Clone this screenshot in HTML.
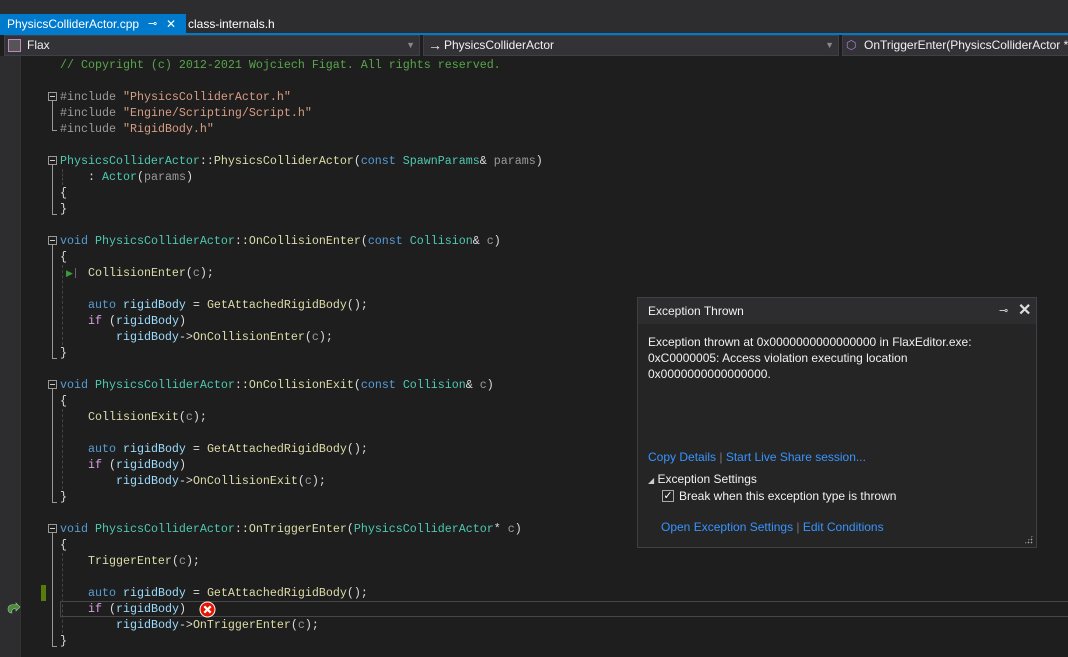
<!DOCTYPE html>
<html><head><meta charset="utf-8"><style>
*{margin:0;padding:0;box-sizing:border-box}
body{width:1068px;height:657px;background:#1e1e1e;overflow:hidden;position:relative;font-family:"Liberation Sans",sans-serif}
.top{position:absolute;left:0;top:0;width:1068px;height:35px;background:#2d2d30}
.tab{position:absolute;top:14px;height:20px;font-size:12px;color:#fff;line-height:20px;white-space:nowrap}
.blue{position:absolute;left:0;top:33px;width:1068px;height:2px;background:#007acc}
.nav{position:absolute;top:35px;height:21px;background:#333337;border:1px solid #3f3f46;color:#f1f1f1;font-size:12px;line-height:19px;white-space:nowrap;overflow:hidden}
.gut{position:absolute;left:0;top:56px;width:20px;height:601px;background:#2d2d30}
.code{position:absolute;left:0;top:0;font-family:"Liberation Mono",monospace;font-size:11.67px;white-space:pre;color:#dcdcdc}
.l{position:absolute;left:60px;height:16px;line-height:16px}
.k{color:#569cd6}.t{color:#4ec9b0}.f{color:#dcdcaa}.s{color:#d69d85}.p{color:#9b9b9b}.c{color:#57a64a}.v{color:#9cdcfe}.g{color:#9a9a9a}.i{color:#d8a0df}
.fold{position:absolute;left:48px;width:9px;height:9px;border:1px solid #999}
.fold:after{content:"";position:absolute;left:1px;top:3px;width:5px;height:1px;background:#ccc}
.vl{position:absolute;left:52px;width:1px;background:#999}
.hl{position:absolute;left:52px;width:5px;height:1px;background:#999}
.dot{position:absolute;left:62px;width:0;border-left:1px dashed #444}
.dlg{position:absolute;left:637px;top:297px;width:400px;height:251px;background:#252526;border:1px solid #3f3f46}
.dh{position:absolute;left:0;top:0;width:398px;height:26px;background:#2d2d30;color:#f1f1f1;font-size:12px;line-height:26px;padding-left:10px}
.dt{position:absolute;color:#f1f1f1;font-size:12px;line-height:16px;white-space:nowrap}
.lk{position:absolute;color:#3794ff;font-size:12px;white-space:nowrap}
</style></head><body>
<div class="top"></div>
<div class="tab" style="left:0;width:186px;background:#007acc;padding-left:7px">PhysicsColliderActor.cpp <span style="position:absolute;left:148px;font-size:11px">⊸</span><span style="position:absolute;left:166px">✕</span></div>
<div class="tab" style="left:188px">class-internals.h</div>
<div class="blue"></div>
<div class="nav" style="left:4px;width:416px;padding-left:22px"><span style="position:absolute;left:3px;top:3px;width:13px;height:13px;border:1px solid #c586c0;background:#555"></span>Flax<span style="position:absolute;right:4px;color:#888;font-size:9px">▼</span></div>
<div class="nav" style="left:423px;width:416px;padding-left:20px"><span style="position:absolute;left:4px;font-size:14px">→</span>PhysicsColliderActor<span style="position:absolute;right:4px;color:#888;font-size:9px">▼</span></div>
<div class="nav" style="left:842px;width:230px;padding-left:21px"><span style="position:absolute;left:3px;color:#b180d7">⬡</span>OnTriggerEnter(PhysicsColliderActor * c</div>
<div class="gut"></div>
<div style="position:absolute;left:20px;top:56px;width:1px;height:601px;background:#333"></div>
<div class="code">
<div class="l c" style="top:57px">// Copyright (c) 2012-2021 Wojciech Figat. All rights reserved.</div>
<div class="l p" style="top:89px">#include <span class="s">"PhysicsColliderActor.h"</span></div>
<div class="l p" style="top:105px">#include <span class="s">"Engine/Scripting/Script.h"</span></div>
<div class="l p" style="top:121px">#include <span class="s">"RigidBody.h"</span></div>
<div class="l" style="top:153px"><span class="t">PhysicsColliderActor</span>::<span class="f">PhysicsColliderActor</span>(<span class="k">const</span> <span class="t">SpawnParams</span>&amp; <span class="g">params</span>)</div>
<div class="l" style="top:169px">    : <span class="t">Actor</span>(<span class="g">params</span>)</div>
<div class="l" style="top:185px">{</div>
<div class="l" style="top:201px">}</div>
<div class="l" style="top:233px"><span class="k">void</span> <span class="t">PhysicsColliderActor</span>::<span class="f">OnCollisionEnter</span>(<span class="k">const</span> <span class="t">Collision</span>&amp; <span class="g">c</span>)</div>
<div class="l" style="top:249px">{</div>
<div class="l" style="top:265px">    <span class="f">CollisionEnter</span>(<span class="g">c</span>);</div>
<div class="l" style="top:297px">    <span class="k">auto</span> <span class="v">rigidBody</span> = <span class="f">GetAttachedRigidBody</span>();</div>
<div class="l" style="top:313px">    <span class="i">if</span> (<span class="v">rigidBody</span>)</div>
<div class="l" style="top:329px">        <span class="v">rigidBody</span>-&gt;<span class="f">OnCollisionEnter</span>(<span class="g">c</span>);</div>
<div class="l" style="top:345px">}</div>
<div class="l" style="top:377px"><span class="k">void</span> <span class="t">PhysicsColliderActor</span>::<span class="f">OnCollisionExit</span>(<span class="k">const</span> <span class="t">Collision</span>&amp; <span class="g">c</span>)</div>
<div class="l" style="top:393px">{</div>
<div class="l" style="top:409px">    <span class="f">CollisionExit</span>(<span class="g">c</span>);</div>
<div class="l" style="top:441px">    <span class="k">auto</span> <span class="v">rigidBody</span> = <span class="f">GetAttachedRigidBody</span>();</div>
<div class="l" style="top:457px">    <span class="i">if</span> (<span class="v">rigidBody</span>)</div>
<div class="l" style="top:473px">        <span class="v">rigidBody</span>-&gt;<span class="f">OnCollisionExit</span>(<span class="g">c</span>);</div>
<div class="l" style="top:489px">}</div>
<div class="l" style="top:521px"><span class="k">void</span> <span class="t">PhysicsColliderActor</span>::<span class="f">OnTriggerEnter</span>(<span class="t">PhysicsColliderActor</span>* <span class="g">c</span>)</div>
<div class="l" style="top:537px">{</div>
<div class="l" style="top:553px">    <span class="f">TriggerEnter</span>(<span class="g">c</span>);</div>
<div class="l" style="top:585px">    <span class="k">auto</span> <span class="v">rigidBody</span> = <span class="f">GetAttachedRigidBody</span>();</div>
<div style="position:absolute;left:60px;top:601px;width:1010px;height:16px;border:1px solid #464646;border-right:none"></div>
<div class="l" style="top:601px">    <span class="i">if</span> (<span class="v">rigidBody</span>)</div>
<div class="l" style="top:617px">        <span class="v">rigidBody</span>-&gt;<span class="f">OnTriggerEnter</span>(<span class="g">c</span>);</div>
<div class="l" style="top:633px">}</div>
</div>
<div class="fold" style="top:92px"></div><div class="vl" style="top:101px;height:29px"></div><div class="hl" style="top:130px"></div>
<div class="fold" style="top:156px"></div><div class="vl" style="top:165px;height:49px"></div><div class="hl" style="top:214px"></div>
<div class="fold" style="top:236px"></div><div class="vl" style="top:245px;height:113px"></div><div class="hl" style="top:358px"></div>
<div class="fold" style="top:380px"></div><div class="vl" style="top:389px;height:113px"></div><div class="hl" style="top:502px"></div>
<div class="fold" style="top:524px"></div><div class="vl" style="top:533px;height:113px"></div><div class="hl" style="top:646px"></div>
<div class="dot" style="top:169px;height:16px"></div>
<div class="dot" style="top:265px;height:80px"></div>
<div class="dot" style="top:409px;height:80px"></div>
<div class="dot" style="top:553px;height:80px"></div>
<div style="position:absolute;left:66px;top:268px;color:#3c9a3c;font-size:9px">▶</div>
<div style="position:absolute;left:75px;top:268px;width:1px;height:10px;background:#666"></div>
<div style="position:absolute;left:41px;top:585px;width:5px;height:16px;background:#587c0c"></div>
<svg style="position:absolute;left:6px;top:602px" width="16" height="14"><path d="M2 7 C2 3 6 2 10 3 L10 1 L14 5 L10 9 L10 7 C7 6 5 8 6 11 C3 11 2 9 2 7Z" fill="#4a8a3a" stroke="#9c9" stroke-width=".6"/></svg>
<svg style="position:absolute;left:199px;top:601px" width="17" height="17"><circle cx="8.5" cy="8.5" r="7.5" fill="#e51400" stroke="#fff" stroke-width="1"/><path d="M5.3 5.3L11.7 11.7M11.7 5.3L5.3 11.7" stroke="#fff" stroke-width="2.2"/></svg>
<div class="dlg">
<div class="dh">Exception Thrown<span style="position:absolute;left:361px;font-size:11px;color:#ddd">⊸</span><span style="position:absolute;left:380px;font-size:16px;font-weight:bold;color:#ddd">✕</span></div>
<div class="dt" style="left:10px;top:36px">Exception thrown at 0x0000000000000000 in FlaxEditor.exe:<br>0xC0000005: Access violation executing location<br>0x0000000000000000.</div>
<div class="lk" style="left:10px;top:152px">Copy Details <span style="color:#777">|</span> Start Live Share session...</div>
<div class="dt" style="left:10px;top:173px"><span style="font-size:8px;color:#ccc">◢</span> Exception Settings</div>
<div style="position:absolute;left:24px;top:192px;width:12px;height:12px;border:1px solid #aaa;color:#fff;font-size:11px;line-height:10px;text-align:center">✓</div>
<div class="dt" style="left:41px;top:190px">Break when this exception type is thrown</div>
<div class="lk" style="left:23px;top:222px">Open Exception Settings <span style="color:#777">|</span> Edit Conditions</div>
<div style="position:absolute;right:3px;bottom:3px;width:9px;height:9px;background:radial-gradient(#aaa 35%,transparent 40%) 0 0/3px 3px;clip-path:polygon(100% 0,100% 100%,0 100%)"></div>
</div>
</body></html>
